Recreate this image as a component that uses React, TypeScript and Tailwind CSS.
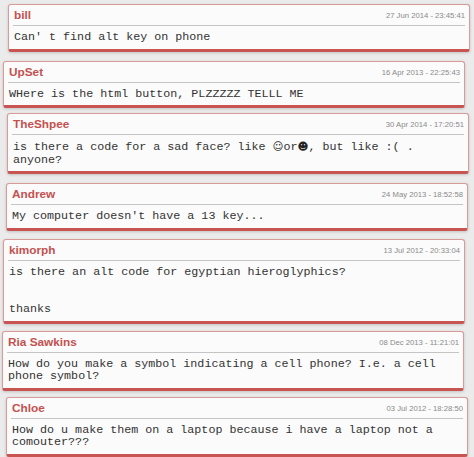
import React from "react";

type Comment = {
  name: string;
  date: string;
  text: React.ReactNode;
  ml: string;
  mt: string;
};

const Smiley = ({ ch }: { ch: string }) => (
  <span className="text-[10.5px] text-[#222] [font-family:'DejaVu_Sans',sans-serif]">{ch + "\uFE0E"}</span>
);

const comments: Comment[] = [
  { name: "bill", date: "27 Jun 2014 - 23:45:41", text: "Can' t find alt key on phone", ml: "ml-[8px]", mt: "mt-[4px]" },
  { name: "UpSet", date: "16 Apr 2013 - 22:25:43", text: "WHere is the html button, PLZZZZZ TELLL ME", ml: "ml-[3px]", mt: "mt-[9px]" },
  {
    name: "TheShpee",
    date: "30 Apr 2014 - 17:20:51",
    text: (
      <>
        is there a code for a sad face? like <Smiley ch={"\u263A"} />or<Smiley ch={"\u263B"} />, but like :( .{"\n"}anyone?
      </>
    ),
    ml: "ml-[7px]",
    mt: "mt-[5px]",
  },
  { name: "Andrew", date: "24 May 2013 - 18:52:58", text: "My computer doesn't have a 13 key...", ml: "ml-[6px]", mt: "mt-[9px]" },
  {
    name: "kimorph",
    date: "13 Jul 2012 - 20:33:04",
    text: "is there an alt code for egyptian hieroglyphics?\n\n\nthanks",
    ml: "ml-[3px]",
    mt: "mt-[8px]",
  },
  {
    name: "Ria Sawkins",
    date: "08 Dec 2013 - 11:21:01",
    text: "How do you make a symbol indicating a cell phone? I.e. a cell phone symbol?",
    ml: "ml-[2px]",
    mt: "mt-[7px]",
  },
  {
    name: "Chloe",
    date: "03 Jul 2012 - 18:28:50",
    text: "How do u make them on a laptop because i have a laptop not a comouter???",
    ml: "ml-[6px]",
    mt: "mt-[6px]",
  },
];

function CommentCard({ c }: { c: Comment }) {
  return (
    <div
      className={`${c.ml} ${c.mt} w-[462px] rounded-[3px] border border-[#d99a9a] border-b-[3px] border-b-[#c95552] bg-[#fbfbfb] shadow-[0_1px_3px_rgba(0,0,0,0.18)]`}
    >
      <div className="mx-[4px] flex h-[20px] items-center justify-between pt-[2px] pl-[1px]">
        <span className="text-[11.8px] font-bold text-[#c4514f] [font-family:'Liberation_Sans',Arial,sans-serif]">
          {c.name}
        </span>
        <span className="text-[7.7px] text-[#8a8a8a] [font-family:'Liberation_Sans',Arial,sans-serif]">
          {c.date}
        </span>
      </div>
      <div className="mx-[4px] h-px bg-[#c4c4c4]" />
      <div className="whitespace-pre-wrap px-[5px] pt-[5px] pb-[5px] text-[11.7px] leading-[12.5px] text-[#333] [font-family:'Liberation_Mono','DejaVu_Sans_Mono',monospace]">
        {c.text}
      </div>
    </div>
  );
}

export default function App() {
  return (
    <div className="h-[457px] w-[474px] overflow-hidden bg-[#ebebeb]">
      <div className="flex flex-col">
        {comments.map((c) => (
          <CommentCard key={c.name} c={c} />
        ))}
      </div>
    </div>
  );
}
